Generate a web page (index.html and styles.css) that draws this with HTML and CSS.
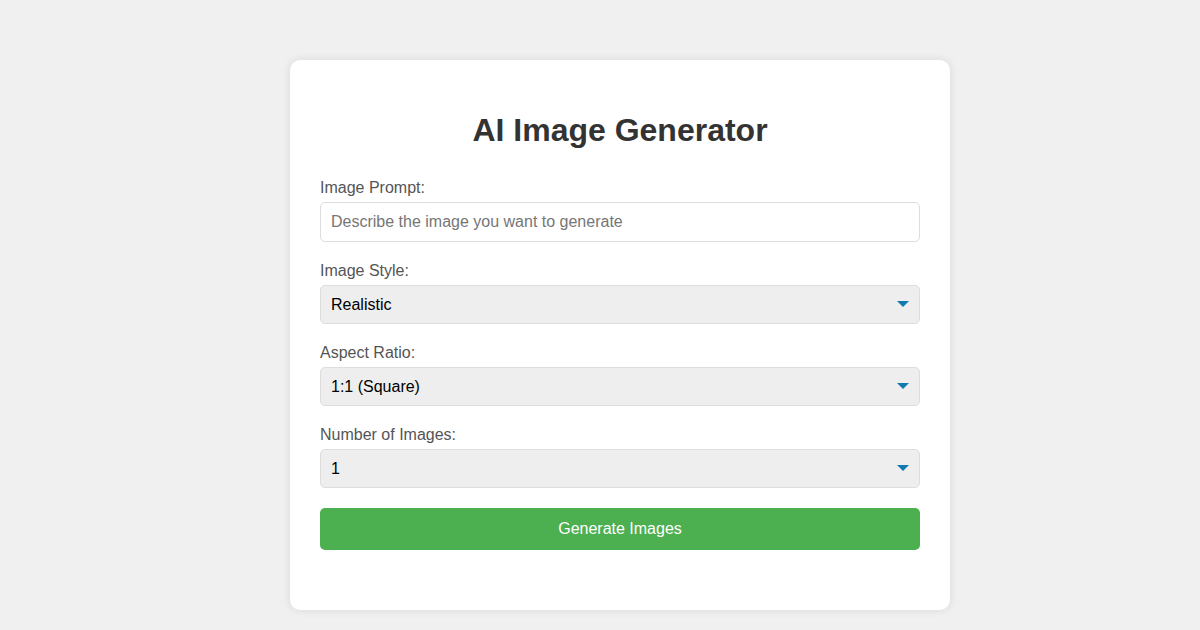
FILE: index.html
```html
<!DOCTYPE html>
<html lang="en">
<head>
<meta charset="utf-8">
<title>AI Image Generator</title>
<link rel="stylesheet" href="styles.css">
</head>
<body>
<div class="card">
  <h1 class="title">AI Image Generator</h1>
  <div class="group">
    <label class="label" for="prompt">Image Prompt:</label>
    <input class="input" id="prompt" type="text" placeholder="Describe the image you want to generate">
  </div>
  <div class="group">
    <label class="label" for="style">Image Style:</label>
    <div class="select-wrap">
      <select class="select" id="style">
        <option>Realistic</option>
      </select>
    </div>
  </div>
  <div class="group">
    <label class="label" for="ratio">Aspect Ratio:</label>
    <div class="select-wrap">
      <select class="select" id="ratio">
        <option>1:1 (Square)</option>
      </select>
    </div>
  </div>
  <div class="group">
    <label class="label" for="count">Number of Images:</label>
    <div class="select-wrap">
      <select class="select" id="count">
        <option>1</option>
      </select>
    </div>
  </div>
  <button class="btn" type="button">Generate Images</button>
</div>
</body>
</html>
```

FILE: styles.css
```css
* { box-sizing: border-box; }
html, body { height: 100%; }
body {
  margin: 0;
  padding: 60px 0 0 40px;
  background: #f0f0f0;
  font-family: "Liberation Sans", Arial, sans-serif;
  overflow: hidden;
}
.card {
  width: 660px;
  margin: 0 auto;
  background: #fff;
  border-radius: 10px;
  box-shadow: 0 0 10px rgba(0, 0, 0, 0.1);
  padding: 30px 30px 60px;
}
.title {
  margin: 21.5px 0 30.5px;
  font-size: 32px;
  line-height: 37px;
  font-weight: bold;
  color: #333;
  text-align: center;
}
.group { margin-bottom: 20px; }
.label {
  display: block;
  margin-bottom: 5px;
  font-size: 16px;
  line-height: 18px;
  color: #555;
}
.input {
  display: block;
  width: 100%;
  height: 40px;
  padding: 0 10px;
  font-family: inherit;
  font-size: 16px;
  color: #333;
  border: 1px solid #ddd;
  border-radius: 5px;
  background: #fff;
  outline: none;
}
.input::placeholder { color: #767676; }
.select-wrap { position: relative; }
.select-wrap::after {
  content: "";
  position: absolute;
  right: 11px;
  top: 16px;
  border-left: 6.5px solid transparent;
  border-right: 6.5px solid transparent;
  border-top: 6px solid #0f7ab0;
  pointer-events: none;
}
.select {
  display: block;
  width: 100%;
  height: 39px;
  padding: 0 10px;
  font-family: inherit;
  font-size: 16px;
  color: #000;
  background: #eee;
  border: 1px solid #ddd;
  border-radius: 5px;
  appearance: none;
  -webkit-appearance: none;
  outline: none;
}
.btn {
  display: block;
  width: 100%;
  height: 42px;
  border: none;
  border-radius: 5px;
  background: #4caf50;
  color: #fff;
  font-family: inherit;
  font-size: 16px;
  cursor: pointer;
}
```
